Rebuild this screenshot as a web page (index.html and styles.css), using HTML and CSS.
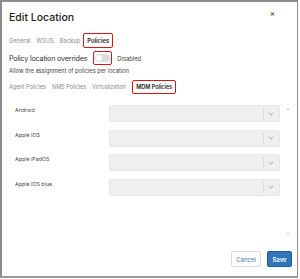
FILE: index.html
```html
<!DOCTYPE html>
<html lang="en">
<head>
    <meta charset="UTF-8">
    <meta name="viewport" content="width=device-width, initial-scale=1.0">
    <title>Edit Location</title>
    <link rel="stylesheet" href="styles.css">
</head>
<body>
    <div class="modal">
        <div class="modal-header">
            <h1 class="modal-title">Edit Location</h1>
            <span class="close">&times;</span>
        </div>
        <div class="tabs top-tabs">
            <span class="tab">General</span>
            <span class="tab">WSUS</span>
            <span class="tab">Backup</span>
            <span class="tab active marked">Policies</span>
        </div>
        <div class="override-row">
            <span class="override-label">Policy location overrides</span>
            <span class="marked toggle-box"><span class="toggle"><span class="knob"></span></span></span>
            <span class="toggle-text">Disabled</span>
        </div>
        <div class="hint">Allow the assignment of policies per location</div>
        <div class="tabs sub-tabs">
            <span class="tab">Agent Policies</span>
            <span class="tab">NMS Policies</span>
            <span class="tab">Virtualization</span>
            <span class="tab active marked">MDM Policies</span>
        </div>
        <div class="scroll-area">
            <div class="rows">
                <div class="row">
                    <span class="row-label">Android</span>
                    <div class="select"><span class="divider"></span><span class="chevron"></span></div>
                </div>
                <div class="row">
                    <span class="row-label">Apple IOS</span>
                    <div class="select"><span class="divider"></span><span class="chevron"></span></div>
                </div>
                <div class="row">
                    <span class="row-label">Apple iPadOS</span>
                    <div class="select"><span class="divider"></span><span class="chevron"></span></div>
                </div>
                <div class="row">
                    <span class="row-label">Apple IOS blue</span>
                    <div class="select"><span class="divider"></span><span class="chevron"></span></div>
                </div>
            </div>
            <div class="scrollbar">
                <span class="arrow up"></span>
                <span class="arrow down"></span>
            </div>
        </div>
        <div class="modal-footer">
            <button class="btn btn-cancel">Cancel</button>
            <button class="btn btn-save">Save</button>
        </div>
    </div>
</body>
</html>
```

FILE: styles.css
```css
body {
    margin: 0;
    padding: 0;
    background: #fff;
    font-family: 'Inter', 'Liberation Sans', sans-serif;
    color: #333;
}
.modal {
    width: 298px;
    height: 278px;
    box-sizing: border-box;
    border: 2px solid #8c8c8c;
    border-right-width: 1px;
    border-bottom: 2px solid #9a9a9a;
    display: flex;
    flex-direction: column;
    padding: 0 0 0 7px;
}
.modal-header {
    display: flex;
    justify-content: space-between;
    align-items: center;
    height: 30px;
    padding-right: 22px;
}
.modal-title {
    margin: 0;
    font-size: 10.5px;
    font-weight: 500;
    color: #222;
}
.close {
    font-size: 8px;
    line-height: 1;
    color: #222;
    margin-top: -9px;
}
.tabs {
    display: flex;
    align-items: center;
    gap: 6px;
    font-size: 5.8px;
    color: #8a8a8a;
}
.top-tabs {
    height: 14px;
    margin-top: 1px;
}
.tab.active {
    color: #222;
    font-weight: 600;
}
.marked {
    border: 1.5px solid #d9141b;
    border-radius: 2px;
}
.tab.marked {
    padding: 3px 3px;
    margin-left: -3px;
}
.override-row {
    display: flex;
    align-items: center;
    gap: 5px;
    margin-top: 4px;
    height: 14px;
}
.override-label {
    font-size: 7.2px;
    letter-spacing: -0.2px;
    color: #333;
}
.toggle-box {
    display: inline-flex;
    padding: 2px 1px;
    margin-left: 1px;
}
.toggle {
    width: 15px;
    height: 8px;
    border-radius: 4px;
    background: #dcdcdc;
    display: inline-flex;
    align-items: center;
    padding-left: 1px;
    box-sizing: border-box;
}
.knob {
    width: 6px;
    height: 6px;
    border-radius: 50%;
    background: #fff;
}
.toggle-text {
    font-size: 5.8px;
    color: #444;
}
.hint {
    font-size: 5.7px;
    color: #444;
    margin-top: 0;
    height: 11px;
    line-height: 11px;
}
.sub-tabs {
    height: 16px;
    margin-top: 3px;
    font-size: 5.5px;
}
.sub-tabs .marked {
    margin-left: 0;
    padding: 3px 3px;
}
.scroll-area {
    flex: 1;
    display: flex;
    padding-top: 10px;
}
.rows {
    width: 271px;
    display: flex;
    flex-direction: column;
    gap: 7.5px;
}
.row {
    display: flex;
    align-items: flex-start;
    padding-left: 6px;
}
.row-label {
    font-size: 5.3px;
    color: #444;
    width: 94px;
    padding-top: 2px;
}
.select {
    width: 171px;
    height: 17px;
    box-sizing: border-box;
    background: #efefef;
    border: 1px solid #e6e6e6;
    border-radius: 2px;
    display: flex;
    justify-content: flex-end;
    align-items: center;
}
.divider {
    width: 1px;
    height: 11px;
    background: #dedede;
}
.chevron {
    width: 3px;
    height: 3px;
    border-right: 1px solid #bdbdbd;
    border-bottom: 1px solid #bdbdbd;
    transform: rotate(45deg);
    margin: -2px 6px 0 5px;
}
.scrollbar {
    display: flex;
    flex-direction: column;
    justify-content: space-between;
    padding: 3px 0 0 7px;
    height: 127px;
}
.arrow {
    width: 0;
    height: 0;
    border-left: 1.5px solid transparent;
    border-right: 1.5px solid transparent;
}
.arrow.up {
    border-bottom: 2px solid #b5b5b5;
}
.arrow.down {
    border-top: 2px solid #b5b5b5;
}
.modal-footer {
    display: flex;
    justify-content: flex-end;
    gap: 6px;
    padding: 0 5px 9px 0;
}
.btn {
    font-family: 'Inter', 'Liberation Sans', sans-serif;
    font-size: 6px;
    height: 16px;
    border-radius: 2px;
    padding: 0;
}
.btn-cancel {
    width: 30px;
    background: #fff;
    border: 1px solid #dcdcdc;
    color: #3a79b8;
}
.btn-save {
    width: 25px;
    background: #2f74b5;
    border: 1px solid #1d5d98;
    color: #fff;
    font-weight: 600;
}
```
